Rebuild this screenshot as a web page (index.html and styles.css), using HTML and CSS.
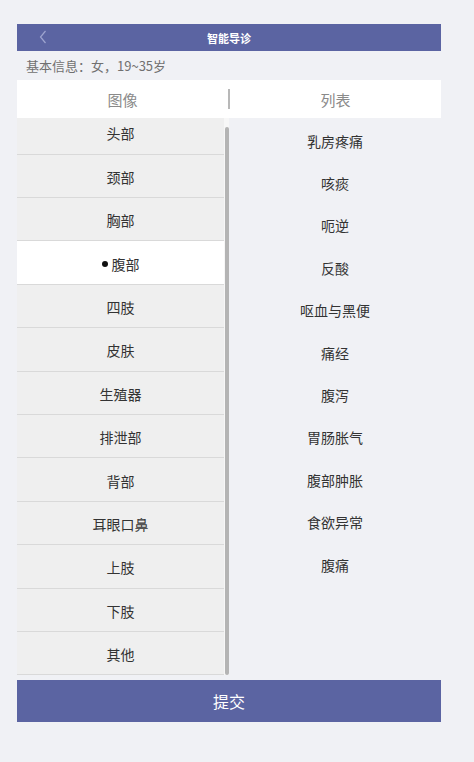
FILE: index.html
```html
<!DOCTYPE html>
<html lang="zh">
<head>
<meta charset="utf-8">
<title>智能导诊</title>
<link rel="stylesheet" href="styles.css">
</head>
<body>
<div class="page">
  <div class="header">
    <svg class="back" width="8" height="14" viewBox="0 0 8 14"><polyline points="6.5,1 1.5,7 6.5,13" fill="none" stroke="#9ea4cf" stroke-width="1.2"/></svg>
    <span class="title">智能导诊</span>
  </div>
  <div class="info">基本信息：女，19~35岁</div>
  <div class="tabs">
    <div class="tab">图像</div>
    <div class="tab-sep"></div>
    <div class="tab">列表</div>
  </div>
  <div class="main">
    <div class="left">
      <ul class="parts">
        <li>头部</li>
        <li>颈部</li>
        <li>胸部</li>
        <li class="active"><span class="dot"></span>腹部</li>
        <li>四肢</li>
        <li>皮肤</li>
        <li>生殖器</li>
        <li>排泄部</li>
        <li>背部</li>
        <li>耳眼口鼻</li>
        <li>上肢</li>
        <li>下肢</li>
        <li>其他</li>
      </ul>
    </div>
    <div class="scroll"><div class="thumb"></div></div>
    <ul class="symptoms">
      <li>乳房疼痛</li>
      <li>咳痰</li>
      <li>呃逆</li>
      <li>反酸</li>
      <li>呕血与黑便</li>
      <li>痛经</li>
      <li>腹泻</li>
      <li>胃肠胀气</li>
      <li>腹部肿胀</li>
      <li>食欲异常</li>
      <li>腹痛</li>
    </ul>
  </div>
  <button class="submit">提交</button>
</div>
</body>
</html>
```
FILE: styles.css
```css
* { box-sizing: border-box; }
html, body { margin: 0; padding: 0; }
body {
  background: #f0f1f5;
  font-family: "Noto Sans CJK SC", "Noto Sans", sans-serif;
  width: 474px;
  height: 762px;
  overflow: hidden;
}
.page {
  width: 424px;
  margin-left: 17px;
  padding-top: 24px;
  display: flex;
  flex-direction: column;
}
.header {
  height: 27px;
  background: #5b64a2;
  display: flex;
  align-items: center;
  justify-content: center;
  position: relative;
}
.back {
  position: absolute;
  left: 22px;
  top: 6px;
}
.title {
  color: #fff;
  font-size: 11px;
  font-weight: bold;
}
.info {
  height: 29px;
  line-height: 29px;
  padding-left: 9px;
  font-size: 13px;
  color: #707070;
}
.tabs {
  height: 38px;
  background: #fff;
  display: flex;
  align-items: center;
}
.tab {
  flex: 1;
  text-align: center;
  font-size: 15px;
  color: #8a8a8a;
}
.tab-sep {
  width: 2px;
  height: 20px;
  background: #b8b8b8;
}
.main {
  height: 557px;
  display: flex;
}
.left {
  width: 207px;
  overflow: hidden;
  background: #efefef;
}
.parts {
  list-style: none;
  margin: -6.8px 0 0 0;
  padding: 0;
}
.parts li {
  height: 43.4px;
  border-bottom: 1px solid #d9d9d9;
  display: flex;
  align-items: center;
  justify-content: center;
  font-size: 14px;
  color: #333;
  padding-top: 2px;
}
.parts li.active {
  background: #fff;
}
.dot {
  width: 6px;
  height: 6px;
  border-radius: 50%;
  background: #111;
  margin-right: 4px;
}
.scroll {
  width: 5px;
  padding-top: 9px;
  background: #f7f7f7;
}
.thumb {
  height: 548px;
  width: 4px;
  margin-left: 1px;
  background: #b4b4b4;
  border-radius: 2px;
}
.symptoms {
  flex: 1;
  list-style: none;
  margin: 0;
  padding: 1.5px 0 0 0;
}
.symptoms li {
  height: 42.4px;
  display: flex;
  align-items: center;
  justify-content: center;
  font-size: 14px;
  color: #333;
}
.submit {
  margin-top: 5px;
  height: 42px;
  border: none;
  background: #5b64a2;
  color: #fff;
  font-family: inherit;
  font-size: 16px;
  padding: 0;
}
```
